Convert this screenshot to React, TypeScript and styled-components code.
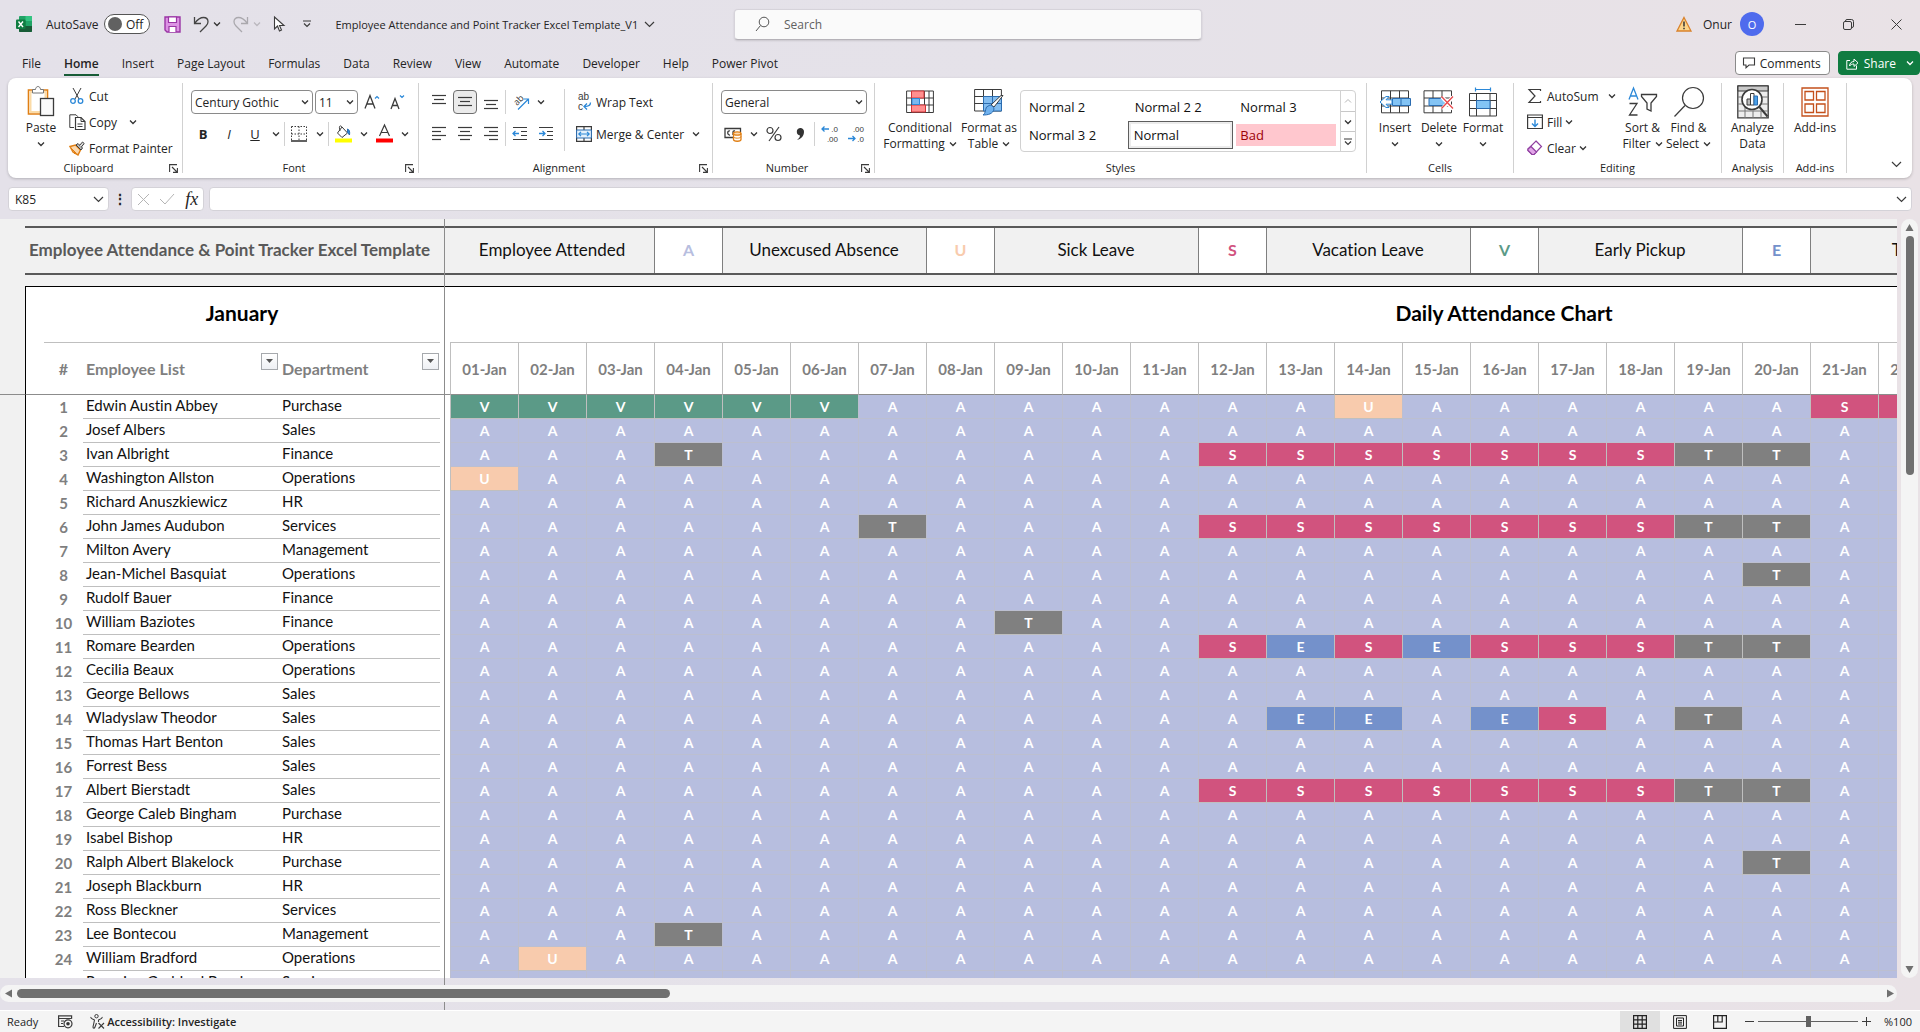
import React from "react";
import styled, { createGlobalStyle } from "styled-components";

const UI_FONT = `"Segoe UI", "Open Sans", "Noto Sans", sans-serif`;
const SHEET_FONT = `"Century Gothic", Lato, "Open Sans", sans-serif`;
const LINE = "#bfbfbf";

const GlobalStyle = createGlobalStyle`
  *, *::before, *::after { box-sizing: border-box; }
  body { margin: 0; font-family: ${UI_FONT}; font-size: 12px; color: #242424; overflow: hidden; }
  button, input, select { font: inherit; color: inherit; margin: 0; }
  button { background: none; border: 0; padding: 0; white-space: nowrap; }
  svg { display: block; flex: none; overflow: visible; }
`;

/* ---------- Icons ---------- */

type IconProps = { w: number; h: number; children: React.ReactNode; stroke?: string };
const Icon = ({ w, h, children, stroke = "#3b3b3b" }: IconProps) => (
  <svg width={w} height={h} viewBox={`0 0 ${w} ${h}`} fill="none" stroke={stroke} aria-hidden="true">
    {children}
  </svg>
);

const Chevron = ({ color = "#333" }: { color?: string }) => (
  <Icon w={8} h={6} stroke={color}><path d="M1 1.500 4 4.500 7 1.500" strokeWidth="1.300" /></Icon>
);
const WideChevron = () => (
  <Icon w={11} h={7}><path d="M1 1 5.500 5.500 10 1" strokeWidth="1.200" /></Icon>
);
const ExcelLogo = () => (
  <Icon w={16} h={16} stroke="none">
    <rect x="3" y="0" width="13" height="16" rx="1" fill="#21a366" />
    <path d="M9.500 0H15a1 1 0 0 1 1 1v4H9.500z" fill="#33c481" />
    <path d="M3 5h6.500v5H3z" fill="#107c41" />
    <path d="M3 10h13v5a1 1 0 0 1-1 1H4a1 1 0 0 1-1-1z" fill="#185c37" />
    <rect x="0" y="3.500" width="9.500" height="9.500" rx="1" fill="#107c41" />
    <path d="m2.500 5.500 4.500 5.500M7 5.500 2.500 11" stroke="#fff" strokeWidth="1.400" />
  </Icon>
);
const SaveIcon = () => (
  <Icon w={17} h={17} stroke="#9b35a5">
    <path d="M1 1h15v15H3l-2-2z" fill="#dc94e4" strokeWidth="1.400" />
    <path d="M4.500 1h8v5.500h-8zM5 16v-5.500h7V16" fill="#fff" strokeWidth="1.200" />
  </Icon>
);
const UndoIcon = () => (
  <Icon w={16} h={17} stroke="#444">
    <path d="M1.500 1v6.500H8M1.800 7.200C5 3 8 1.500 10.500 1.500c3 0 4.500 2 4.500 4.300 0 1.700-.8 3-2 4.200L7 16" strokeWidth="1.300" />
  </Icon>
);
const RedoIcon = () => (
  <Icon w={16} h={17} stroke="#aaa8ad">
    <path d="M14.500 1v6.500H8M14.200 7.200C11 3 8 1.500 5.500 1.500 2.500 1.500 1 3.500 1 5.800c0 1.700.8 3 2 4.200L9 16" strokeWidth="1.300" />
  </Icon>
);
const CursorIcon = () => (
  <Icon w={12} h={16}><path d="M1.500 1v12l3-3 2 5 2-1-2-4.500H11z" fill="#fff" strokeWidth="1.100" /></Icon>
);
const CustomizeIcon = () => (
  <Icon w={8} h={8}><path d="M0 1h8M1 3.500l3 3 3-3" strokeWidth="1.200" /></Icon>
);
const SearchIcon = () => (
  <Icon w={15} h={16} stroke="#555"><circle cx="9" cy="6" r="4.800" /><path d="M5.500 9.500 1 15" /></Icon>
);
const WarningIcon = () => (
  <Icon w={16} h={16} stroke="#d9822b">
    <path d="M8 1.500 15 15H1z" fill="#fcd58a" strokeWidth="1.300" />
    <path d="M8 5.500v5M8 11.800v1.500" stroke="#333" strokeWidth="1.500" />
  </Icon>
);
const MinimizeIcon = () => <Icon w={11} h={11}><path d="M0 5.500h11" /></Icon>;
const RestoreIcon = () => (
  <Icon w={11} h={11}><rect x=".5" y="2.500" width="8" height="8" rx="1.500" /><path d="M2.500 2.500V2A1.500 1.500 0 0 1 4 .5h4.500a2 2 0 0 1 2 2V7A1.500 1.500 0 0 1 9 8.500" /></Icon>
);
const CloseIcon = () => <Icon w={11} h={11}><path d="m.5.5 10 10M10.500.5l-10 10" /></Icon>;
const CommentIcon = () => (
  <Icon w={12} h={12}><path d="M.5 1h11v7H6L3 10.800V8H.5z" strokeWidth="1.100" /></Icon>
);
const ShareIcon = () => (
  <Icon w={13} h={13} stroke="#fff"><path d="M4 3.500H.8v8.700h9.700V8.500M3.500 9c.3-3 2-4.500 4.500-4.500V2l4 3.800-4 3.700V7C6 7 4.500 7.600 3.500 9z" /></Icon>
);

const PasteIcon = () => (
  <Icon w={28} h={32}>
    <path d="M1.500 4h19v24h-19z" stroke="#e07f14" strokeWidth="1.600" fill="#fff" />
    <path d="M3.500 6h15v20h-15z" stroke="#fbdba7" strokeWidth="2" />
    <path d="M5.500 7V3.500h3c.3-4 4.700-4 5 0h3V7z" fill="#fff" stroke="#777" />
    <rect x="13.500" y="12.500" width="13" height="17" fill="#fafafa" strokeWidth="1.300" />
  </Icon>
);
const CutIcon = () => (
  <Icon w={14} h={16}>
    <path d="m3 0 6 11M11 0 5 11" />
    <circle cx="3" cy="13" r="2.300" stroke="#2b88d8" strokeWidth="1.300" /><circle cx="10.500" cy="13" r="2.300" stroke="#2b88d8" strokeWidth="1.300" />
  </Icon>
);
const CopyIcon = () => (
  <Icon w={17} h={16}>
    <path d="M5 13.500H.8V.8H7l2 2" /><path d="M6.500 3.500h5.500l4 4v8H6.500z" fill="#fff" strokeWidth="1.200" /><path d="M12 3.500v4h4M8.500 10h5M8.500 12.500h5" />
  </Icon>
);
const PainterIcon = () => (
  <Icon w={16} h={15}>
    <path d="M1 5.500 6.500 4l5 5-2.500 5L4 11z" fill="#fbd9b0" stroke="#e07f14" strokeWidth="1.500" />
    <path d="m2 7 5 5M5 13l2-2" stroke="#e07f14" />
    <path d="m7 4 2-1.500 4.500 4.500-1.500 2z" fill="#bbb" /><path d="m10.500 4.500 3-3.500 1.700 1.500-3 3.700" fill="#ddd" />
  </Icon>
);
const BordersIcon = () => (
  <Icon w={16} h={16}><path d="M.5.5h15M8 .5v15M.5 8h15M.5.5v15M15.500.5v15" strokeDasharray="1.500 1.500" /><path d="M0 15h16" strokeWidth="1.600" /></Icon>
);
const FillColorIcon = () => (
  <Icon w={17} h={18}>
    <path d="m7 2 5.500 6L7 12.500 2.500 8zM7 2c-1.500-2-3-1-2.500 1l.5 3" /><path d="M12.500 4c2 .5 2.500 3 2 6l-2-2.500z" fill="#2b88d8" stroke="#2b6cb0" />
    <path d="M0 15.500h17" stroke="#ffff00" strokeWidth="4" />
  </Icon>
);
const FontColorIcon = () => (
  <Icon w={17} h={18}><path d="M3.500 11 8.500 0l5 11M5.500 7.500h6" strokeWidth="1.200" /><path d="M0 15.500h17" stroke="#f00" strokeWidth="4" /></Icon>
);
const GrowFontIcon = () => (
  <Icon w={16} h={16}><path d="M1 14.500 6 1.500l5 13M2.800 10h6.500" strokeWidth="1.300" /><path d="m11 4.500 2-2 2 2" stroke="#2b88d8" strokeWidth="1.200" /></Icon>
);
const ShrinkFontIcon = () => (
  <Icon w={16} h={16}><path d="M1 15 5 4.500 9 15M2.500 11.500h5" strokeWidth="1.300" /><path d="m10 1.500 2 2 2-2" stroke="#2b88d8" strokeWidth="1.200" /></Icon>
);
const Lines = ({ rows }: { rows: [number, number, number][] }) => (
  <Icon w={16} h={16}>{rows.map(([y, a, b]) => <path key={y} d={`M${a} ${y}.500H${b}`} strokeWidth="1.200" />)}</Icon>
);
const OrientationIcon = () => (
  <Icon w={17} h={17}>
    <text transform="translate(5 12) rotate(-45)" fontSize="9" fill="#3b3b3b" stroke="none" fontFamily="Open Sans">ab</text>
    <path d="M6 15.500 16 5.500M11.500 5h5v5" stroke="#2b88d8" strokeWidth="1.200" />
  </Icon>
);
const IndentIcon = ({ flip }: { flip?: boolean }) => (
  <Icon w={16} h={16}>
    <path d="M1 1.500h14M9 5.500h6M9 9.500h6M1 13.500h14" strokeWidth="1.200" />
    <path d={flip ? "M1 7.500h6M4.500 5 7 7.500 4.500 10" : "M7 7.500H1M3.500 5 1 7.500 3.500 10"} stroke="#2b88d8" strokeWidth="1.300" />
  </Icon>
);
const WrapIcon = () => (
  <Icon w={16} h={18}>
    <g fontSize="10" fill="#3b3b3b" stroke="none" fontFamily="Liberation Sans">
      <text x="2" y="7">ab</text>
      <text x="2" y="17">c</text>
    </g>
    <path d="M14.500 9.500c0 3-2 4-6 4M11 10.500 8 13.500l3 3" stroke="#2b88d8" strokeWidth="1.300" />
  </Icon>
);
const MergeIcon = () => (
  <Icon w={16} h={16}>
    <path d="M.6.6h14.800v14.800H.6zM8 .6v4M8 12v3.500" strokeWidth="1.200" />
    <path d="M.6 4h14.800v8H.6z" fill="#e3f0fb" stroke="#2b6cb0" />
    <path d="M3 8h10M5 5.800 2.800 8 5 10.200M11 5.800 13.200 8 11 10.200" stroke="#2b88d8" strokeWidth="1.200" />
  </Icon>
);
const CurrencyIcon = () => (
  <Icon w={18} h={16}>
    <path d="M9 11.500H1v-9h15.500V6M6 5C3 4 3 9.500 6 9M9 9V6c0-1.500 2-1 2-1" strokeWidth="1.300" />
    <path d="M9.500 7.500v6c0 2.300 7.500 2.300 7.500 0v-6" fill="#fff" stroke="#e07f14" strokeWidth="1.300" />
    <ellipse cx="13.200" cy="7.500" rx="3.800" ry="1.700" fill="#fbd9b0" stroke="#e07f14" strokeWidth="1.300" /><path d="M9.500 10.500c0 2.200 7.500 2.200 7.500 0" stroke="#e07f14" />
  </Icon>
);
const PercentIcon = () => (
  <Icon w={16} h={16}><circle cx="4" cy="4.500" r="3" strokeWidth="1.200" /><circle cx="12" cy="11.500" r="3" strokeWidth="1.200" /><path d="M13 1 3 15" strokeWidth="1.200" /></Icon>
);
const CommaIcon = () => (
  <Icon w={10} h={14} stroke="none"><path d="M5 1a3.500 3.500 0 0 1 4 3.700C9 9 6 12 2 13c2-1.800 3-3 3-4.500A3.800 3.800 0 0 1 5 1z" fill="#333" /></Icon>
);
const DecimalIcon = ({ decrease }: { decrease?: boolean }) => (
  <Icon w={17} h={18}>
    <g fill="#3b3b3b" stroke="none" fontSize="8" fontFamily="Liberation Sans" textAnchor="end">
      <text x="17" y="7">{decrease ? ".00" : ".0"}</text>
      <text x="17" y="17">{decrease ? ".0" : ".00"}</text>
    </g>
    <path d={decrease ? "M1 13.500h7M5.500 11 8 13.500 5.500 16" : "M8 4H1M3.500 1.500 1 4l2.500 2.500"} stroke="#2b88d8" strokeWidth="1.300" />
  </Icon>
);
const ConditionalIcon = () => (
  <Icon w={28} h={24}>
    <path d="M.6 1h26.800v21.500H.6zM5.500 1v21.500M18.500 1v21.500M23 1v21.500M.6 8h26.800M.6 15h26.800" />
    <path d="M5.500 1h12.500v7H5.500zM5.500 15h14v7h-14z" fill="#ff8f8f" stroke="#d13438" /><path d="M6 8.500h7.500v6H6z" fill="#7ab8f0" stroke="#2b88d8" />
  </Icon>
);
const FormatTableIcon = () => (
  <Icon w={30} h={28}>
    <path d="M.6 1.500h26.800v21.500H.6zM9.500 1.500v21.500M18.500 1.500V8M.6 8.500h26.800M.6 15.500h9" />
    <path d="M9.500 8.500h18v14.500h-18z" fill="#83bdf0" stroke="#2b6cb0" /><path d="M18.500 8.500V23M9.500 15.500h18" stroke="#2b6cb0" />
    <path d="M29 7.500 20 19l-3-2L27 7.500z" fill="#fff" /><path d="M16 17c2 .5 4 2 4 4-1 5-6 6-11 6 3-2 2-5 3.500-8z" fill="#6fb1ee" stroke="#2b6cb0" />
  </Icon>
);
const InsertCellsIcon = () => (
  <Icon w={32} h={24}>
    <path d="M2.500.8h27v22h-27zM11.500.8v22M20.500.8v22M2.500 8h27M2.500 16h27" />
    <path d="M13.500 8.500h18v7h-18z" fill="#83c4f5" stroke="#2b6cb0" /><path d="M22 8.500v7" stroke="#2b6cb0" />
    <path d="M13 9.800H7l3-3.300H7L1 12l6 5.500h3l-3-3.300h6z" fill="#fff" stroke="#2b88d8" />
  </Icon>
);
const DeleteCellsIcon = () => (
  <Icon w={32} h={24}>
    <path d="M1 .8h27.500v22H1zM10 .8v22M19 .8v22M1 8h27.500M1 16h27.500" />
    <path d="M6 8.500h16v7H6z" fill="#83c4f5" stroke="#2b6cb0" />
    <path d="m19 7 11 12M30 7 19 19" stroke="#fff" strokeWidth="4" /><path d="m18.500 6.500 11.500 12M30 6.500l-11.500 12" stroke="#e8484c" strokeWidth="1.300" />
  </Icon>
);
const FormatCellsIcon = () => (
  <Icon w={30} h={30}>
    <path d="M1.500 6.500h27v22.500h-27zM8.500 6.500V29M22 6.500V29M1.500 13.500h27M1.500 21.500h27" />
    <path d="M8.500 13.500H22v8H8.500z" fill="#83c4f5" stroke="#2b6cb0" /><path d="M7.500 2.500h15M7.500.5v4M22.500.5v4" stroke="#2b88d8" strokeWidth="1.200" />
  </Icon>
);
const SigmaIcon = () => <Icon w={16} h={16}><path d="M13.500 3V1.500H2L8 8l-6 6.500h11.500V13" strokeWidth="1.200" /></Icon>;
const FillIcon = () => (
  <Icon w={16} h={16}><path d="M.6 1h14.800v13.500H.6zM.6 3.500h14.800" strokeWidth="1.200" /><path d="M8 5.500V12M5 9.500l3 3 3-3" stroke="#2b88d8" strokeWidth="1.400" /></Icon>
);
const ClearIcon = () => (
  <Icon w={16} h={16} stroke="#8f3fa0">
    <path d="m9 1 5.500 5.500L7 14.500H5L1 10.500V9z" fill="#fff" strokeWidth="1.200" /><path d="M4 6.500 9.500 12 7 14.500H5L1 10.500V9z" fill="#e2a5e8" strokeWidth="1.200" />
  </Icon>
);
const SortFilterIcon = () => (
  <Icon w={30} h={30}>
    <path d="M1 12.500 5.500 1 10 12.500M2.500 9h6" stroke="#2b88d8" strokeWidth="1.300" />
    <path d="M1.500 16.500H9L1.500 28H9.500" strokeWidth="1.300" /><path d="M13.500 7.500h15v2L23 16v8l-4-2v-6l-5.500-6.500z" strokeWidth="1.300" />
  </Icon>
);
const FindIcon = () => <Icon w={32} h={32}><circle cx="20" cy="12" r="10.500" strokeWidth="1.200" /><path d="m12 19.500-10.500 11" strokeWidth="1.200" /></Icon>;
const AnalyzeIcon = () => (
  <Icon w={32} h={34}>
    <path d="M.8.8h30.400v32H.8z" fill="#ededed" strokeWidth="1.300" /><path d="M1 1h30v5H1z" fill="#c9c9c9" />
    <path d="M1 12h30M1 19h30M1 26h30M8 19v14M16 26v7M24 26v7" stroke="#777" />
    <circle cx="15" cy="14.500" r="10" fill="#fff" strokeWidth="1.600" /><path d="m22.500 22 8 9.500" strokeWidth="2" />
    <path d="M10 14h3.500v6H10z" fill="#bbb" /><path d="M13.500 8.500H17V20h-3.500z" fill="#fff" /><path d="M17 11h3.500v9H17z" fill="#4ba0e8" stroke="#2b6cb0" />
  </Icon>
);
const AddinsIcon = () => (
  <Icon w={28} h={30} stroke="#c4501b">
    <path d="M1 1h26v28H1zM4 4.500h8.500V13H4zM15.500 4.500H24V13h-8.500zM4 17h8.500v8.500H4zM15.500 17H24v8.500h-8.500z" strokeWidth="1.300" />
  </Icon>
);
const LauncherIcon = () => <Icon w={9} h={9}><path d="M.6 8V.6H8M3 3l5 5M8.400 4v4.400H4" strokeWidth="1.100" /></Icon>;
const RecordIcon = () => (
  <Icon w={15} h={14}><path d="M6 11.500H.6V.8h13v3M.6 3.500h13M3 6h3M3 8.500h2" strokeWidth="1.200" /><circle cx="10" cy="8.800" r="4" strokeWidth="1.200" /><circle cx="10" cy="8.800" r="1.800" fill="#333" stroke="none" /></Icon>
);
const AccessibilityIcon = () => (
  <Icon w={15} h={15}><circle cx="6.500" cy="2.200" r="1.700" /><path d="M1 3c-1 1.500 3 2.500 3.500 3L3 13c0 1.500 1.500 1.500 2 0l1.500-4M12 3c1 1.500-3 2.500-3.500 3v2M8.500 9l5.500 5.500M14 9l-5.500 5.500" strokeWidth="1.100" /></Icon>
);
const GridViewIcon = () => <Icon w={14} h={14} stroke="#222"><path d="M.6.6h12.800v12.800H.6zM4.800.6v12.800M9.200.6v12.800M.6 4.800h12.800M.6 9.200h12.800" strokeWidth="1.200" /></Icon>;
const PageViewIcon = () => <Icon w={14} h={14} stroke="#222"><path d="M.6.6h12.800v12.800H.6zM3.500 3h7v8h-7zM5 5.500h4M5 7.200h4M5 9h4" /></Icon>;
const BreakViewIcon = () => <Icon w={14} h={14} stroke="#222"><path d="M.6.6h12.800v12.800H.6zM4.800.6V7h4.400V.6M.6 7h4.200" strokeWidth="1.200" /></Icon>;

/* ---------- Shell ---------- */

const Window = styled.div`
  height: 100vh;
  display: flex;
  flex-direction: column;
  background: linear-gradient(90deg, #e4e1e9 0%, #e5e2e9 55%, #e9e2e6 100%);
`;
const TitleBar = styled.header`
  display: grid;
  grid-template-columns: 1fr 468px 1fr;
  align-items: center;
  height: 48px;
  padding-left: 16px;
`;
const TitleLeft = styled.div`display: flex; align-items: center; min-width: 0; gap: 14px;`;
const TitleRight = styled.div`
  display: flex;
  align-items: center;
  justify-content: flex-end;
  gap: 8px;
  padding-right: 4px;
  > svg { margin-right: 3px; }
`;
const ToggleLabel = styled.label`display: flex; align-items: center; gap: 6px;`;
const Toggle = styled.button`
  display: flex;
  align-items: center;
  justify-content: space-between;
  width: 46px;
  height: 20px;
  padding: 0 6px 0 3px;
  border: 1px solid #555;
  border-radius: 10px;
  background: #fff;
  font-size: 12px;
`;
const Knob = styled.span`width: 14px; height: 14px; border-radius: 50%; background: #616161;`;
const QuickButton = styled.button<{ $wide?: boolean }>`
  display: flex;
  align-items: center;
  gap: 4px;
  padding: 0 ${(p) => (p.$wide ? 6 : 0)}px;
`;
const QuickTools = styled.div`display: flex; align-items: center; gap: 12px;`;
const FileName = styled.button`display: flex; align-items: center; gap: 6px; margin-left: 4px; font-size: 11px;`;
const SearchBox = styled.label`
  display: flex;
  align-items: center;
  gap: 14px;
  height: 31px;
  padding: 0 20px;
  background: #fafafa;
  border: 1px solid #d6d3da;
  border-bottom-color: #b5b2b8;
  border-radius: 4px;
  box-shadow: 0 1px 2px rgba(0, 0, 0, 0.12);
  input { flex: 1; border: 0; background: none; outline: 0; padding: 0; }
  input::placeholder { color: #616161; opacity: 1; }
`;
const Avatar = styled.span`
  display: grid;
  place-items: center;
  width: 24px;
  height: 24px;
  margin-right: 8px;
  border-radius: 50%;
  background: #4f6bed;
  color: #fff;
  font-size: 11px;
`;
const WindowButton = styled.button`display: grid; place-items: center; width: 40px; height: 32px;`;

const TabBar = styled.nav`
  display: flex;
  align-items: center;
  justify-content: space-between;
  height: 30px;
  padding-left: 12px;
`;
const TabList = styled.div`display: flex; gap: 3px;`;
const Tab = styled.button<{ $active?: boolean }>`
  height: 26px;
  padding: 0 10px;
  font-weight: ${(p) => (p.$active ? 600 : 400)};
  position: relative;
  &::after {
    content: "";
    display: ${(p) => (p.$active ? "block" : "none")};
    position: absolute;
    left: 10px;
    right: 10px;
    bottom: 0;
    height: 2px;
    background: #185c37;
  }
`;
const TabActions = styled.div`display: flex; gap: 8px;`;
const ActionButton = styled.button<{ $primary?: boolean }>`
  display: flex;
  align-items: center;
  gap: 5px;
  height: 24px;
  padding: 0 ${(p) => (p.$primary ? 5 : 8)}px 0 7px;
  border: 1px solid ${(p) => (p.$primary ? "#107c41" : "#8a8a8a")};
  border-radius: 4px;
  background: ${(p) => (p.$primary ? "#107c41" : "#fff")};
  color: ${(p) => (p.$primary ? "#fff" : "#242424")};
  svg:last-child:not(:first-child) { margin-left: 5px; }
`;

/* ---------- Ribbon ---------- */

const Ribbon = styled.div`
  display: flex;
  height: 100px;
  margin: 0 8px 9px;
  padding: 5px 0;
  background: #fff;
  border-radius: 8px;
  box-shadow: 0 1px 3px rgba(0, 0, 0, 0.22);
`;
const GroupBox = styled.section<{ $w: number }>`
  display: flex;
  flex-direction: column;
  flex: none;
  width: ${(p) => p.$w}px;
  border-right: 1px solid #d1d1d1;
`;
const GroupBody = styled.div`flex: 1; display: flex; min-height: 0;`;
const GroupFoot = styled.div`
  display: flex;
  align-items: center;
  height: 11px;
  font-size: 11px;
  line-height: 11px;
`;
const GroupName = styled.span`flex: 1; text-align: center;`;
const Launcher = styled.button`width: 13px; padding-top: 1px;`;

const Group = ({ name, w, launcher, children }: { name: string; w: number; launcher?: boolean; children: React.ReactNode }) => (
  <GroupBox $w={w} aria-label={name}>
    <GroupBody>{children}</GroupBody>
    <GroupFoot>
      <GroupName>{name}</GroupName>
      {launcher && <Launcher aria-label={`${name} settings`}><LauncherIcon /></Launcher>}
    </GroupFoot>
  </GroupBox>
);

const Stack = styled.div<{ $pad?: string; $gap?: number }>`
  display: flex;
  flex-direction: column;
  gap: ${(p) => p.$gap ?? 8}px;
  padding: ${(p) => p.$pad ?? "7px 8px 0"};
`;
const Row = styled.div`display: flex; align-items: center; gap: 2px; height: 24px;`;
const Tool = styled.button<{ $on?: boolean }>`
  display: grid;
  place-items: center;
  width: 24px;
  height: 24px;
  font-size: 13px;
  border: 1px solid ${(p) => (p.$on ? "#6e6e6e" : "transparent")};
  border-radius: 4px;
  background: ${(p) => (p.$on ? "#ebebeb" : "none")};
  b, i, u { line-height: 16px; }
`;
const Caret = styled.button`display: grid; place-items: center; width: 13px; height: 24px;`;
const Divider = styled.span<{ $tall?: boolean }>`
  width: 1px;
  height: ${(p) => (p.$tall ? 62 : 24)}px;
  margin: ${(p) => (p.$tall ? "6px 2px 0" : "0")};
  background: #d1d1d1;
`;
const TextTool = styled.button`
  display: flex;
  align-items: center;
  gap: 3px;
  height: 24px;
`;
const ListTool = styled(TextTool)`height: 26px;`;
const IconSlot = styled.span`width: 18px; display: grid; place-items: center;`;
const Spacer = styled.span<{ $w?: number }>`width: ${(p) => p.$w ?? 6}px;`;

const SelectWrap = styled.label<{ $w: number }>`
  display: grid;
  grid-template-columns: 1fr 14px;
  align-items: center;
  width: ${(p) => p.$w}px;
  height: 24px;
  border: 1px solid #8a8a8a;
  border-radius: 4px;
  background: #fff;
  select {
    grid-area: 1 / 1 / 2 / 3;
    appearance: none;
    border: 0;
    outline: 0;
    height: 22px;
    padding: 0 0 0 3px;
    background: none;
  }
  svg { grid-area: 1 / 2; justify-self: center; pointer-events: none; }
`;
const Select = ({ w, label, value }: { w: number; label: string; value: string }) => (
  <SelectWrap $w={w}>
    <select aria-label={label} defaultValue={value}><option>{value}</option></select>
    <Chevron />
  </SelectWrap>
);

const BigButton = styled.button<{ $w: number }>`
  display: flex;
  flex-direction: column;
  align-items: center;
  flex: none;
  width: ${(p) => p.$w}px;
  line-height: 16px;
  padding-top: 1px;
`;
const BigIcon = styled.span`height: 36px; display: grid; place-items: center;`;
const BigLine = styled.span`display: flex; align-items: center; justify-content: center; gap: 4px; height: 16px;`;
const Big = ({ w, icon, lines, caret }: { w: number; icon: React.ReactNode; lines: string[]; caret?: "inline" | "below" }) => (
  <BigButton $w={w}>
    <BigIcon>{icon}</BigIcon>
    {lines.map((t, i) => (
      <BigLine key={t}>{t}{caret === "inline" && i === lines.length - 1 && <Chevron />}</BigLine>
    ))}
    {caret === "below" && <BigLine><Chevron /></BigLine>}
  </BigButton>
);

const Gallery = styled.div`
  display: grid;
  grid-template-columns: 1fr 15px;
  width: 336px;
  height: 62px;
  margin: 7px 0 0 1px;
  border: 1px solid #d1d1d1;
  border-radius: 4px;
`;
const GalleryGrid = styled.div`
  display: grid;
  grid-template-columns: repeat(3, 1fr);
  grid-auto-rows: 28px;
  padding: 2px 1px;
`;
const StyleItem = styled.button<{ $kind?: "selected" | "bad" }>`
  font-size: 13px;
  text-align: left;
  margin: ${(p) => (p.$kind === "bad" ? "3px 3px" : "0")};
  padding-left: ${(p) => (p.$kind === "bad" ? 4 : p.$kind ? 5 : 7)}px;
  border: ${(p) => (p.$kind === "selected" ? "1px solid #5e5e5e" : "0")};
  box-shadow: ${(p) => (p.$kind === "selected" ? "inset 0 0 0 2px #ececec" : "none")};
  background: ${(p) => (p.$kind === "bad" ? "#ffc7ce" : "#fff")};
  color: ${(p) => (p.$kind === "bad" ? "#9c0006" : "#111")};
`;
const GalleryNav = styled.div`
  display: grid;
  grid-template-rows: repeat(3, 1fr);
  border-left: 1px solid #d1d1d1;
  button { display: grid; place-items: center; }
  button + button { border-top: 1px solid #c8c8c8; }
`;
const Collapse = styled.button`margin: auto 10px 5px auto;`;

/* ---------- Formula bar ---------- */

const FormulaBar = styled.div`display: flex; align-items: center; height: 24px; margin: 0 8px 8px;`;
const NameBox = styled.label`
  display: flex;
  align-items: center;
  width: 101px;
  height: 24px;
  padding: 0 6px;
  background: #fff;
  border: 1px solid #d4d2d8;
  border-radius: 4px;
  input { width: 78px; border: 0; outline: 0; padding: 0; background: none; }
`;
const Dots = styled.span`width: 22px; text-align: center; font-weight: 700; font-size: 14px; line-height: 20px;`;
const FxBox = styled.div`
  display: flex;
  align-items: center;
  justify-content: space-around;
  width: 73px;
  height: 24px;
  margin-right: 5px;
  background: #fff;
  border: 1px solid #d4d2d8;
  border-radius: 4px;
`;
const FxButton = styled.button`font: italic 400 18px/20px "Liberation Serif", serif;`;
const FormulaInput = styled.label`
  flex: 1;
  display: flex;
  align-items: center;
  height: 24px;
  padding: 0 4px 0 6px;
  background: #fff;
  border: 1px solid #d4d2d8;
  border-radius: 4px;
  input { flex: 1; border: 0; outline: 0; background: none; }
`;

/* ---------- Sheet ---------- */

const Workspace = styled.main`
  flex: 1;
  min-height: 0;
  display: grid;
  grid-template: minmax(0, 1fr) 7px 17px 8px / minmax(0, 1fr) 4px 17px 2px;
  position: relative;
  &::after {
    content: "";
    position: absolute;
    left: 444px;
    top: 0;
    bottom: 0;
    width: 1px;
    background: #8c8c8c;
  }
`;
const Sheet = styled.div`
  overflow: hidden;
  background: #f1f1f1;
  font-family: ${SHEET_FONT};
  font-variant-ligatures: none;
  padding-top: 7px;
`;
const Banner = styled.div`
  display: flex;
  height: 49px;
  margin: 0 0 11px 25px;
  border-top: 2px solid #595959;
  border-bottom: 2px solid #595959;
  overflow: hidden;
  font-size: 17px;
  line-height: 43px;
`;
const BannerTitle = styled.h1`
  flex: none;
  width: 425px;
  margin: 0;
  padding-left: 4px;
  font-size: 17px;
  font-weight: 700;
  color: #595959;
  white-space: nowrap;
`;
const LegendName = styled.span`
  flex: none;
  width: 204px;
  text-align: center;
  color: #111;
`;
const LegendCode = styled.span<{ $color: string }>`
  flex: none;
  width: 69px;
  margin-right: -1px;
  text-align: center;
  font-size: 16px;
  font-weight: 700;
  background: #fff;
  border: solid #7f7f7f;
  border-width: 0 1px;
  color: ${(p) => p.$color};
`;

const Grid = styled.table`
  table-layout: fixed;
  width: 2558px;
  border-collapse: separate;
  border-spacing: 0;
  background: #fff;
  font-size: 15px;
  th, td { padding: 0; overflow: hidden; white-space: nowrap; text-align: left; }
`;
const Margin = styled.td<{ $head?: boolean }>`
  background: #f1f1f1;
  border-right: 1px solid #000;
  border-bottom: ${(p) => (p.$head ? "1px solid #8c8c8c" : "0")};
`;
const TopRow = styled.tr`
  height: 57px;
  line-height: 52px;
  font-size: 21px;
  td, th { border-top: 1px solid #000; }
  td:first-child { border-top: 0; }
  && th { text-align: center; vertical-align: top; font-weight: 700; color: #000; border-bottom: 1px solid ${LINE}; }
`;
const HeadRow = styled.tr`
  height: 52px;
  color: #7f7f7f;
  font-size: 16px;
  td, th { border-bottom: 1px solid #8c8c8c; }
`;
const HeadCell = styled.th<{ $center?: boolean }>`
  && { padding-left: ${(p) => (p.$center ? 0 : 3)}px; text-align: ${(p) => (p.$center ? "center" : "left")}; }
`;
const HeadInner = styled.span`display: flex; align-items: center; justify-content: space-between; height: 36px; padding-right: 1px;`;
const FilterButton = styled.button`
  display: grid;
  place-items: center;
  align-self: flex-start;
  width: 17px;
  height: 17px;
  margin-top: 2px;
  border: 1px solid #a6a9ad;
  background: linear-gradient(#fff, #eef0f4);
`;
const DateHead = styled.th`
  && { text-align: center; font-size: 15px; border-left: 1px solid ${LINE}; }
`;
const BodyRow = styled.tr`height: 24px; line-height: 21px;`;
const NumberCell = styled.td`&& { text-align: center; font-weight: 700; color: #7f7f7f; }`;
const TextCell = styled.td`&& { padding: 0 0 2px 3px; color: #111; border-bottom: 1px solid ${LINE}; }`;
const CODE_COLORS: Record<string, string> = {
  A: "#b7bedf", V: "#5b9a87", U: "#f8cbad", S: "#d1537e", T: "#808080", E: "#7491cb",
};
const CodeCell = styled.td<{ $code: string }>`
  && {
    text-align: center;
    font-weight: 700;
    font-size: 14px;
    color: #fff;
    background: ${(p) => CODE_COLORS[p.$code]};
    border: solid ${(p) => (p.$code === "A" ? "#bcbfd0" : LINE)};
    border-width: 0 0 1px 1px;
  }
`;

const employees: [string, string, string?][] = [
  ["Edwin Austin Abbey", "Purchase", "VVVVVVAAAAAAAUAAAAAASS"],
  ["Josef Albers", "Sales"],
  ["Ivan Albright", "Finance", "AAATAAAAAAASSSSSSSTTAA"],
  ["Washington Allston", "Operations", "UAAAAAAAAAAAAAAAAAAAAA"],
  ["Richard Anuszkiewicz", "HR"],
  ["John James Audubon", "Services", "AAAAAATAAAASSSSSSSTTAA"],
  ["Milton Avery", "Management"],
  ["Jean-Michel Basquiat", "Operations", "AAAAAAAAAAAAAAAAAAATAA"],
  ["Rudolf Bauer", "Finance"],
  ["William Baziotes", "Finance", "AAAAAAAATAAAAAAAAAAAAA"],
  ["Romare Bearden", "Operations", "AAAAAAAAAAASESESSSTTAA"],
  ["Cecilia Beaux", "Operations"],
  ["George Bellows", "Sales"],
  ["Wladyslaw Theodor", "Sales", "AAAAAAAAAAAAEEAESATAAA"],
  ["Thomas Hart Benton", "Sales"],
  ["Forrest Bess", "Sales"],
  ["Albert Bierstadt", "Sales", "AAAAAAAAAAASSSSSSSTTAA"],
  ["George Caleb Bingham", "Purchase"],
  ["Isabel Bishop", "HR"],
  ["Ralph Albert Blakelock", "Purchase", "AAAAAAAAAAAAAAAAAAATAA"],
  ["Joseph Blackburn", "HR"],
  ["Ross Bleckner", "Services"],
  ["Lee Bontecou", "Management", "AAATAAAAAAAAAAAAAAAAAA"],
  ["William Bradford", "Operations", "AUAAAAAAAAAAAAAAAAAAAA"],
  ["Romaine Goddard Brooks", "Services"],
];
const ALL_ATTENDED = "A".repeat(22);
const days = Array.from({ length: 22 }, (_, i) => `${String(i + 1).padStart(2, "0")}-Jan`);
const legend: [string, string][] = [
  ["Employee Attended", "A"], ["Unexcused Absence", "U"], ["Sick Leave", "S"], ["Vacation Leave", "V"], ["Early Pickup", "E"],
];
const FilterArrow = () => <Icon w={7} h={4} stroke="none"><path d="M0 0h7L3.500 4z" fill="#555" /></Icon>;

/* ---------- Scroll bars and status ---------- */

const VScroll = styled.div`
  grid-area: 1 / 3;
  display: grid;
  grid-template-rows: 17px 1fr 17px;
  justify-items: center;
  align-items: center;
  background: #f4f4f4;
  border-radius: 9px;
`;
const VThumb = styled.span`width: 8px; height: 33%; align-self: start; border-radius: 4px; background: #707070;`;
const HScroll = styled.div`
  grid-area: 3 / 1;
  z-index: 1;
  display: grid;
  grid-template-columns: 17px 1fr 14px;
  align-items: center;
  justify-items: center;
  background: #f4f4f4;
  border-radius: 9px;
`;
const HThumb = styled.span`width: 35%; height: 9px; justify-self: start; border-radius: 5px; background: #707070;`;
const ScrollArrow = ({ d }: { d: string }) => <Icon w={9} h={9} stroke="none"><path d={d} fill="#707070" /></Icon>;

const StatusBar = styled.footer`
  display: flex;
  align-items: center;
  height: 22px;
  padding: 0 8px 0 7px;
  background: #f4f4f4;
  border-top: 1px solid #fff;
  font-size: 11px;
`;
const StatusButton = styled.button<{ $ml: number }>`
  display: flex;
  align-items: center;
  gap: 2px;
  font-weight: 600;
  margin-left: ${(p) => p.$ml}px;
`;
const ViewButtons = styled.div`display: flex; margin-left: auto;`;
const ViewButton = styled.button<{ $on?: boolean }>`
  display: grid;
  place-items: center;
  width: 40px;
  height: 21px;
  background: ${(p) => (p.$on ? "#e0e0e0" : "none")};
`;
const Zoom = styled.div`display: flex; align-items: center; gap: 4px; margin: 0 13px 0 5px;`;
const ZoomSlider = styled.input`
  appearance: none;
  width: 100px;
  height: 12px;
  background: linear-gradient(#616161, #616161) center / 100% 1px no-repeat;
  &::-webkit-slider-thumb { appearance: none; width: 5px; height: 11px; background: #616161; }
`;

export default function App() {
  return (
    <>
      <GlobalStyle />
      <Window>
        <TitleBar>
          <TitleLeft>
            <ExcelLogo />
            <ToggleLabel>AutoSave<Toggle role="switch" aria-checked="false"><Knob />Off</Toggle></ToggleLabel>
            <QuickTools>
              <QuickButton aria-label="Save"><SaveIcon /></QuickButton>
              <QuickButton aria-label="Undo"><UndoIcon /><Chevron /></QuickButton>
              <QuickButton aria-label="Redo"><RedoIcon /><Chevron color="#bbb8be" /></QuickButton>
              <QuickButton aria-label="Select"><CursorIcon /></QuickButton>
              <QuickButton $wide aria-label="Customize toolbar"><CustomizeIcon /></QuickButton>
            </QuickTools>
            <FileName>Employee Attendance and Point Tracker Excel Template_V1<WideChevron /></FileName>
          </TitleLeft>
          <SearchBox><SearchIcon /><input aria-label="Search" placeholder="Search" /></SearchBox>
          <TitleRight>
            <WarningIcon />
            <span>Onur</span>
            <Avatar>O</Avatar>
            <WindowButton aria-label="Minimize"><MinimizeIcon /></WindowButton>
            <WindowButton aria-label="Restore"><RestoreIcon /></WindowButton>
            <WindowButton aria-label="Close"><CloseIcon /></WindowButton>
          </TitleRight>
        </TitleBar>

        <TabBar>
          <TabList>
            {["File", "Home", "Insert", "Page Layout", "Formulas", "Data", "Review", "View", "Automate", "Developer", "Help", "Power Pivot"].map((t) => (
              <Tab key={t} $active={t === "Home"}>{t}</Tab>
            ))}
          </TabList>
          <TabActions>
            <ActionButton><CommentIcon />Comments</ActionButton>
            <ActionButton $primary><ShareIcon />Share<Chevron color="#fff" /></ActionButton>
          </TabActions>
        </TabBar>

        <Ribbon>
          <Group name="Clipboard" w={175} launcher>
            <Spacer />
            <Big w={54} icon={<PasteIcon />} lines={["Paste"]} caret="below" />
            <Stack $pad="0" $gap={0}>
              <ListTool><IconSlot><CutIcon /></IconSlot>Cut</ListTool>
              <ListTool><IconSlot><CopyIcon /></IconSlot>Copy<Spacer /><Chevron /></ListTool>
              <ListTool><IconSlot><PainterIcon /></IconSlot>Format Painter</ListTool>
            </Stack>
          </Group>

          <Group name="Font" w={236} launcher>
            <Stack>
              <Row>
                <Select w={122} label="Font" value="Century Gothic" />
                <Select w={43} label="Font size" value="11" />
                <Tool aria-label="Increase font size"><GrowFontIcon /></Tool>
                <Tool aria-label="Decrease font size"><ShrinkFontIcon /></Tool>
              </Row>
              <Row>
                <Tool aria-label="Bold"><b>B</b></Tool>
                <Tool aria-label="Italic"><i>I</i></Tool>
                <Tool aria-label="Underline"><u>U</u></Tool>
                <Caret aria-label="Underline options"><Chevron /></Caret>
                <Divider />
                <Tool aria-label="Borders"><BordersIcon /></Tool>
                <Caret aria-label="Border options"><Chevron /></Caret>
                <Divider />
                <Tool aria-label="Fill color"><FillColorIcon /></Tool>
                <Caret aria-label="Fill color options"><Chevron /></Caret>
                <Tool aria-label="Font color"><FontColorIcon /></Tool>
                <Caret aria-label="Font color options"><Chevron /></Caret>
              </Row>
            </Stack>
          </Group>

          <Group name="Alignment" w={294} launcher>
            <Stack $pad="7px 4px 0 8px">
              <Row>
                <Tool aria-label="Top align"><Lines rows={[[1, 1, 15], [5, 3, 13], [9, 1, 15]]} /></Tool>
                <Tool $on aria-label="Middle align"><Lines rows={[[3, 1, 15], [7, 3, 13], [11, 1, 15]]} /></Tool>
                <Tool aria-label="Bottom align"><Lines rows={[[6, 1, 15], [10, 3, 13], [14, 1, 15]]} /></Tool>
                <Divider />
                <Tool aria-label="Orientation"><OrientationIcon /></Tool>
                <Caret aria-label="Orientation options"><Chevron /></Caret>
              </Row>
              <Row>
                <Tool aria-label="Align left"><Lines rows={[[1, 1, 15], [5, 1, 10], [9, 1, 15], [13, 1, 10]]} /></Tool>
                <Tool aria-label="Center"><Lines rows={[[1, 1, 15], [5, 3, 13], [9, 1, 15], [13, 3, 13]]} /></Tool>
                <Tool aria-label="Align right"><Lines rows={[[1, 1, 15], [5, 6, 15], [9, 1, 15], [13, 6, 15]]} /></Tool>
                <Divider />
                <Tool aria-label="Decrease indent"><IndentIcon /></Tool>
                <Tool aria-label="Increase indent"><IndentIcon flip /></Tool>
              </Row>
            </Stack>
            <Divider $tall />
            <Stack>
              <TextTool><IconSlot><WrapIcon /></IconSlot>Wrap Text</TextTool>
              <TextTool><IconSlot><MergeIcon /></IconSlot>Merge &amp; Center<Spacer $w={2} /><Chevron /></TextTool>
            </Stack>
          </Group>

          <Group name="Number" w={162} launcher>
            <Stack>
              <Row><Select w={146} label="Number format" value="General" /></Row>
              <Row>
                <Tool aria-label="Accounting format"><CurrencyIcon /></Tool>
                <Caret aria-label="Accounting options"><Chevron /></Caret>
                <Tool aria-label="Percent"><PercentIcon /></Tool>
                <Tool aria-label="Comma"><CommaIcon /></Tool>
                <Divider />
                <Tool aria-label="Increase decimal"><DecimalIcon /></Tool>
                <Tool aria-label="Decrease decimal"><DecimalIcon decrease /></Tool>
              </Row>
            </Stack>
          </Group>

          <Group name="Styles" w={492}>
            <Spacer />
            <Big w={78} icon={<ConditionalIcon />} lines={["Conditional", "Formatting"]} caret="inline" />
            <Big w={60} icon={<FormatTableIcon />} lines={["Format as", "Table"]} caret="inline" />
            <Gallery>
              <GalleryGrid>
                <StyleItem>Normal 2</StyleItem><StyleItem>Normal 2 2</StyleItem><StyleItem>Normal 3</StyleItem>
                <StyleItem>Normal 3 2</StyleItem><StyleItem $kind="selected">Normal</StyleItem><StyleItem $kind="bad">Bad</StyleItem>
              </GalleryGrid>
              <GalleryNav>
                <button aria-label="Previous styles"><Icon w={8} h={6} stroke="#b5b5b5"><path d="M1 4.500 4 1.500l3 3" /></Icon></button>
                <button aria-label="Next styles"><Chevron /></button>
                <button aria-label="More styles"><CustomizeIcon /></button>
              </GalleryNav>
            </Gallery>
          </Group>

          <Group name="Cells" w={147}>
            <Spacer />
            <Big w={44} icon={<InsertCellsIcon />} lines={["Insert"]} caret="below" />
            <Big w={44} icon={<DeleteCellsIcon />} lines={["Delete"]} caret="below" />
            <Big w={44} icon={<FormatCellsIcon />} lines={["Format"]} caret="below" />
          </Group>

          <Group name="Editing" w={208}>
            <Stack $pad="0 4px 0 12px" $gap={0}>
              <ListTool><IconSlot><SigmaIcon /></IconSlot>AutoSum<Spacer $w={3} /><Chevron /></ListTool>
              <ListTool><IconSlot><FillIcon /></IconSlot>Fill<Chevron /></ListTool>
              <ListTool><IconSlot><ClearIcon /></IconSlot>Clear<Chevron /></ListTool>
            </Stack>
            <Big w={46} icon={<SortFilterIcon />} lines={["Sort &", "Filter"]} caret="inline" />
            <Big w={46} icon={<FindIcon />} lines={["Find &", "Select"]} caret="inline" />
          </Group>

          <Group name="Analysis" w={62}>
            <Big w={61} icon={<AnalyzeIcon />} lines={["Analyze", "Data"]} />
          </Group>
          <Group name="Add-ins" w={63}>
            <Big w={62} icon={<AddinsIcon />} lines={["Add-ins"]} />
          </Group>
          <Collapse aria-label="Collapse ribbon"><WideChevron /></Collapse>
        </Ribbon>

        <FormulaBar>
          <NameBox><input aria-label="Name box" defaultValue="K85" /><WideChevron /></NameBox>
          <Dots>⋮</Dots>
          <FxBox>
            <button aria-label="Cancel"><Icon w={13} h={13} stroke="#b5b5b5"><path d="m1 1 11 11M12 1 1 12" /></Icon></button>
            <button aria-label="Enter"><Icon w={16} h={12} stroke="#b5b5b5"><path d="m1 6 5 5L15 1" /></Icon></button>
            <FxButton aria-label="Insert function">fx</FxButton>
          </FxBox>
          <FormulaInput><input aria-label="Formula" /><WideChevron /></FormulaInput>
        </FormulaBar>

        <Workspace>
          <Sheet>
            <Banner>
              <BannerTitle>Employee Attendance &amp; Point Tracker Excel Template</BannerTitle>
              {legend.map(([name, code]) => (
                <React.Fragment key={code}>
                  <LegendName>{name}</LegendName>
                  <LegendCode $color={CODE_COLORS[code]}>{code}</LegendCode>
                </React.Fragment>
              ))}
              <LegendName>Tardy</LegendName>
            </Banner>
            <Grid>
              <colgroup>
                {[26, 18, 39, 196, 161, 10].map((w, i) => <col key={i} width={w} />)}
                {Array.from({ length: 31 }, (_, i) => <col key={i} width={68} />)}
              </colgroup>
              <thead>
                <TopRow>
                  <Margin />
                  <td />
                  <th colSpan={3}>January</th>
                  <td />
                  <th colSpan={31}>Daily Attendance Chart</th>
                </TopRow>
                <HeadRow>
                  <Margin $head />
                  <td />
                  <HeadCell $center>#</HeadCell>
                  <HeadCell><HeadInner>Employee List<FilterButton aria-label="Filter employees"><FilterArrow /></FilterButton></HeadInner></HeadCell>
                  <HeadCell><HeadInner>Department<FilterButton aria-label="Filter departments"><FilterArrow /></FilterButton></HeadInner></HeadCell>
                  <td />
                  {days.map((d) => <DateHead key={d}>{d}</DateHead>)}
                </HeadRow>
              </thead>
              <tbody>
                {employees.map(([name, dept, codes = ALL_ATTENDED], i) => (
                  <BodyRow key={name}>
                    <Margin />
                    <td />
                    <NumberCell>{i + 1}</NumberCell>
                    <TextCell>{name}</TextCell>
                    <TextCell>{dept}</TextCell>
                    <td />
                    {codes.split("").map((c, d) => <CodeCell key={d} $code={c}>{c}</CodeCell>)}
                  </BodyRow>
                ))}
              </tbody>
            </Grid>
          </Sheet>
          <VScroll>
            <ScrollArrow d="M4.500 1 8.500 8h-8z" />
            <VThumb />
            <ScrollArrow d="M.5 1h8l-4 7z" />
          </VScroll>
          <HScroll>
            <ScrollArrow d="M8 .5v8L1 4.500z" />
            <HThumb />
            <ScrollArrow d="M1 .5v8l7-4z" />
          </HScroll>
        </Workspace>

        <StatusBar>
          <span>Ready</span>
          <StatusButton $ml={20} aria-label="Record macro"><RecordIcon /></StatusButton>
          <StatusButton $ml={17}><AccessibilityIcon />Accessibility: Investigate</StatusButton>
          <ViewButtons>
            <ViewButton $on aria-label="Normal view"><GridViewIcon /></ViewButton>
            <ViewButton aria-label="Page layout view"><PageViewIcon /></ViewButton>
            <ViewButton aria-label="Page break view"><BreakViewIcon /></ViewButton>
          </ViewButtons>
          <Zoom>
            <button aria-label="Zoom out"><Icon w={9} h={9}><path d="M0 4.500h9" /></Icon></button>
            <ZoomSlider type="range" aria-label="Zoom" min={0} max={200} defaultValue={100} />
            <button aria-label="Zoom in"><Icon w={9} h={9}><path d="M0 4.500h9M4.500 0v9" /></Icon></button>
          </Zoom>
          <span>%100</span>
        </StatusBar>
      </Window>
    </>
  );
}
